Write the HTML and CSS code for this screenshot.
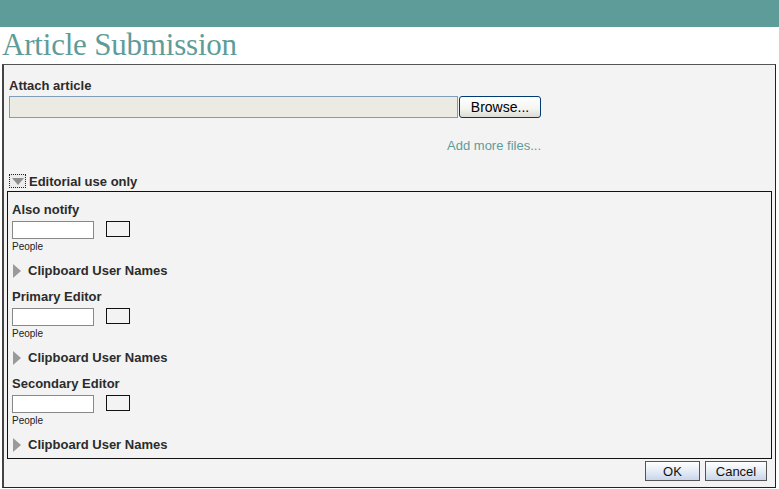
FILE: index.html
```html
<!DOCTYPE html>
<html lang="en">
<head>
    <meta charset="UTF-8">
    <title>Article Submission</title>
    <link rel="stylesheet" href="styles.css">
</head>
<body>
    <div class="top-bar"></div>
    <h1 class="title">Article Submission</h1>

    <div class="form-box">
        <label class="field-label">Attach article</label>
        <div class="file-row">
            <div class="file-input"></div>
            <button class="browse-btn">Browse...</button>
        </div>
        <div class="more-files"><a href="#">Add more files...</a></div>

        <div class="toggle">
            <span class="toggle-icon"><span class="tri-down"></span></span>
            <span class="toggle-text">Editorial use only</span>
        </div>

        <div class="editorial">
            <!-- Also notify -->
            <div class="people-field">
                <div class="field-label">Also notify</div>
                <div class="people-row">
                    <div class="text-input"></div>
                    <div class="pick-box"></div>
                </div>
                <div class="hint">People</div>
                <div class="clipboard"><span class="tri-right"></span>Clipboard User Names</div>
            </div>

            <!-- Primary Editor -->
            <div class="people-field">
                <div class="field-label">Primary Editor</div>
                <div class="people-row">
                    <div class="text-input"></div>
                    <div class="pick-box"></div>
                </div>
                <div class="hint">People</div>
                <div class="clipboard"><span class="tri-right"></span>Clipboard User Names</div>
            </div>

            <!-- Secondary Editor -->
            <div class="people-field">
                <div class="field-label">Secondary Editor</div>
                <div class="people-row">
                    <div class="text-input"></div>
                    <div class="pick-box"></div>
                </div>
                <div class="hint">People</div>
                <div class="clipboard"><span class="tri-right"></span>Clipboard User Names</div>
            </div>
        </div>

        <div class="actions">
            <button class="act-btn ok-btn">OK</button>
            <button class="act-btn cancel-btn">Cancel</button>
        </div>
    </div>
</body>
</html>
```

FILE: styles.css
```css
* {
    margin: 0;
    padding: 0;
    box-sizing: border-box;
}

body {
    background: #fff;
    font-family: 'Liberation Sans', Arial, sans-serif;
    font-size: 13px;
    color: #2b2b2b;
    width: 779px;
    height: 489px;
    overflow: hidden;
}

.top-bar {
    height: 27px;
    background: #5e9c99;
}

.title {
    font-family: 'Liberation Serif', Georgia, serif;
    font-weight: normal;
    font-size: 31px;
    color: #5e9c99;
    line-height: 36px;
    padding-left: 2px;
    letter-spacing: -0.2px;
}

.form-box {
    margin: 1px 3px 0 2px;
    height: 424px;
    border: 1px solid #222;
    border-top-color: #555;
    border-left: 2px solid #444;
    background: #f3f3f3;
    padding: 13px 0 0 5px;
}

.field-label {
    display: block;
    font-weight: bold;
    line-height: 15px;
}

.file-row {
    display: flex;
    gap: 1px;
    margin-top: 3px;
}

.file-input {
    width: 449px;
    height: 22px;
    background: #ebebe4;
    border: 1px solid #7f9db9;
}

.browse-btn {
    width: 82px;
    height: 22px;
    border: 1px solid #003c74;
    border-radius: 3px;
    background: linear-gradient(#ffffff, #f4f4f0 60%, #dcdcd3);
    font-family: 'Liberation Sans', Arial, sans-serif;
    font-size: 14px;
    color: #000;
}

.more-files {
    width: 532px;
    text-align: right;
    margin-top: 20px;
    line-height: 15px;
}

.more-files a {
    color: #5e9c99;
    text-decoration: none;
}

.toggle {
    display: flex;
    align-items: center;
    gap: 3px;
    margin-top: 20px;
    height: 16px;
}

.toggle-icon {
    width: 17px;
    height: 14px;
    border: 1px dotted #222;
    background: #ececec;
    display: flex;
    align-items: center;
    justify-content: center;
}

.tri-down {
    width: 0;
    height: 0;
    border-left: 6px solid transparent;
    border-right: 6px solid transparent;
    border-top: 7px solid #8e8e8e;
}

.toggle-text {
    font-weight: bold;
}

.editorial {
    margin-top: 2px;
    width: 765px;
    height: 268px;
    border: 1px solid #111;
    padding: 10px 0 0 4px;
    margin-left: -2px;
}

.people-field {
    height: 87px;
}

.people-row {
    display: flex;
    align-items: flex-start;
    gap: 12px;
    margin-top: 4px;
}

.text-input {
    width: 82px;
    height: 18px;
    background: #fff;
    border: 1px solid #888;
}

.pick-box {
    width: 24px;
    height: 16px;
    border: 1px solid #111;
}

.hint {
    font-size: 10px;
    line-height: 12px;
    margin-top: 2px;
    color: #222;
}

.clipboard {
    display: flex;
    align-items: center;
    gap: 7px;
    font-weight: bold;
    margin-top: 10px;
    line-height: 15px;
    padding-left: 1px;
}

.tri-right {
    width: 0;
    height: 0;
    border-top: 7px solid transparent;
    border-bottom: 7px solid transparent;
    border-left: 8px solid #9a9a9a;
}

.actions {
    display: flex;
    justify-content: flex-end;
    gap: 5px;
    padding-right: 8px;
    margin-top: 2px;
}

.act-btn {
    height: 20px;
    border: 1px solid #555;
    background: linear-gradient(#ffffff, #e6ecf5 50%, #c9d6ea);
    font-family: 'Liberation Sans', Arial, sans-serif;
    font-size: 13px;
    color: #111;
}

.ok-btn {
    width: 55px;
}

.cancel-btn {
    width: 62px;
}
```
